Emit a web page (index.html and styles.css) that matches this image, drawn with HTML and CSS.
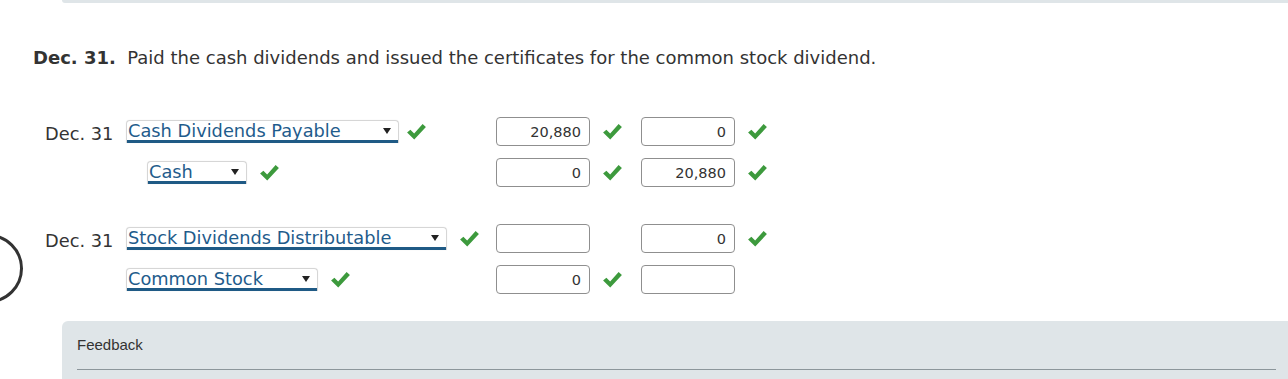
FILE: index.html
```html
<!DOCTYPE html>
<html>
<head>
    <title>Journal Entry</title>
    <link rel="stylesheet" href="styles.css">
</head>
<body>
    <div class="prev-panel"></div>
    <div class="ring"></div>

    <p class="prompt"><b>Dec. 31.</b>&nbsp; Paid the cash dividends and issued the certificates for the common stock dividend.</p>

    <div class="journal">
        <div class="entry">
            <div class="date">Dec. 31</div>
            <div class="account">
                <span class="pick" style="width: 271px"><select><option>Cash Dividends Payable</option></select></span>
                <svg class="check first" viewBox="0 0 20 17"><polygon points="0,9 3.5,6 7.5,10 16.5,0 20,3.2 7.6,16.5"/></svg>
            </div>
            <div class="amount"><input type="text" value="20,880"></div>
            <div class="mark"><svg class="check" viewBox="0 0 20 17"><polygon points="0,9 3.5,6 7.5,10 16.5,0 20,3.2 7.6,16.5"/></svg></div>
            <div class="amount"><input type="text" value="0"></div>
            <div class="mark"><svg class="check" viewBox="0 0 20 17"><polygon points="0,9 3.5,6 7.5,10 16.5,0 20,3.2 7.6,16.5"/></svg></div>

            <div class="date"></div>
            <div class="account credit">
                <span class="pick" style="width: 98px"><select><option>Cash</option></select></span>
                <svg class="check" viewBox="0 0 20 17"><polygon points="0,9 3.5,6 7.5,10 16.5,0 20,3.2 7.6,16.5"/></svg>
            </div>
            <div class="amount"><input type="text" value="0"></div>
            <div class="mark"><svg class="check" viewBox="0 0 20 17"><polygon points="0,9 3.5,6 7.5,10 16.5,0 20,3.2 7.6,16.5"/></svg></div>
            <div class="amount"><input type="text" value="20,880"></div>
            <div class="mark"><svg class="check" viewBox="0 0 20 17"><polygon points="0,9 3.5,6 7.5,10 16.5,0 20,3.2 7.6,16.5"/></svg></div>
        </div>

        <div class="entry">
            <div class="date">Dec. 31</div>
            <div class="account">
                <span class="pick" style="width: 319px"><select><option>Stock Dividends Distributable</option></select></span>
                <svg class="check" viewBox="0 0 20 17"><polygon points="0,9 3.5,6 7.5,10 16.5,0 20,3.2 7.6,16.5"/></svg>
            </div>
            <div class="amount"><input type="text" value=""></div>
            <div class="mark"></div>
            <div class="amount"><input type="text" value="0"></div>
            <div class="mark"><svg class="check" viewBox="0 0 20 17"><polygon points="0,9 3.5,6 7.5,10 16.5,0 20,3.2 7.6,16.5"/></svg></div>

            <div class="date"></div>
            <div class="account">
                <span class="pick" style="width: 190px"><select><option>Common Stock</option></select></span>
                <svg class="check" viewBox="0 0 20 17"><polygon points="0,9 3.5,6 7.5,10 16.5,0 20,3.2 7.6,16.5"/></svg>
            </div>
            <div class="amount"><input type="text" value="0"></div>
            <div class="mark"><svg class="check" viewBox="0 0 20 17"><polygon points="0,9 3.5,6 7.5,10 16.5,0 20,3.2 7.6,16.5"/></svg></div>
            <div class="amount"><input type="text" value=""></div>
            <div class="mark"></div>
        </div>
    </div>

    <div class="feedback">
        <div class="feedback-title">Feedback</div>
        <div class="feedback-rule"></div>
    </div>
</body>
</html>
```

FILE: styles.css
```css
body {
    margin: 0;
    font-family: "DejaVu Sans", Verdana, sans-serif;
    color: #333;
    background: #fff;
    overflow: hidden;
}
.prev-panel {
    height: 3px;
    margin-left: 62px;
    background-color: #dfe5e8;
    border-bottom-left-radius: 6px;
}
.ring {
    position: absolute;
    left: -46px;
    top: 234px;
    width: 63px;
    height: 63px;
    border: 3px solid #333;
    border-radius: 50%;
}
.prompt {
    margin: 43px 0 0 33px;
    font-size: 18px;
    line-height: 24px;
}
.prompt b {
    font-weight: bold;
}
.journal {
    margin-top: 47px;
    padding-left: 45px;
}
.entry {
    display: grid;
    grid-template-columns: 81px 370px 94px 51px 94px 60px;
    grid-auto-rows: 29px;
    row-gap: 12px;
    margin-bottom: 37px;
}
.entry:last-child {
    margin-bottom: 0;
}
.date {
    font-size: 17.8px;
    line-height: 29px;
    padding-top: 2px;
}
.account {
    display: flex;
    align-items: center;
}
.account.credit {
    padding-left: 21px;
}
.pick {
    position: relative;
    display: inline-block;
    height: 22px;
    border: 1px solid #d6d6d6;
    border-bottom: none;
    border-radius: 4px 4px 0 0;
    box-shadow: 0 0 1px rgba(0, 0, 0, 0.15);
}
.pick::after {
    content: "";
    position: absolute;
    right: 7px;
    top: 7px;
    border-left: 4px solid transparent;
    border-right: 4px solid transparent;
    border-top: 6px solid #222;
}
.pick select {
    appearance: none;
    -webkit-appearance: none;
    display: block;
    width: 100%;
    height: 22px;
    margin: 0;
    padding: 0 0 0 1px;
    border: none;
    border-bottom: 3px solid #1f5a85;
    background: transparent;
    font-family: "DejaVu Sans", Verdana, sans-serif;
    font-size: 17.8px;
    line-height: 19px;
    color: #1f5c8c;
    box-sizing: border-box;
}
.check {
    width: 19px;
    height: 16px;
    margin-left: 13px;
    fill: #3d9a3d;
}
.check.first {
    margin-left: 8px;
}
.mark {
    display: flex;
    align-items: center;
}
.amount input {
    display: block;
    width: 94px;
    height: 29px;
    margin: 0;
    padding: 0 8px;
    border: 1px solid #8f8f8f;
    border-radius: 4px;
    box-sizing: border-box;
    text-align: right;
    font-family: "DejaVu Sans", Verdana, sans-serif;
    font-size: 14.5px;
    color: #333;
    background: #fff;
}
.feedback {
    box-sizing: border-box;
    height: 58px;
    margin: 27px 0 0 62px;
    padding: 15px 12px 0 15px;
    background-color: #dfe5e8;
    border-top-left-radius: 6px;
}
.feedback-title {
    font-family: "Liberation Sans", Arial, sans-serif;
    font-size: 15px;
    color: #333;
}
.feedback-rule {
    margin-top: 16px;
    height: 1px;
    background-color: #8c969b;
}
```
